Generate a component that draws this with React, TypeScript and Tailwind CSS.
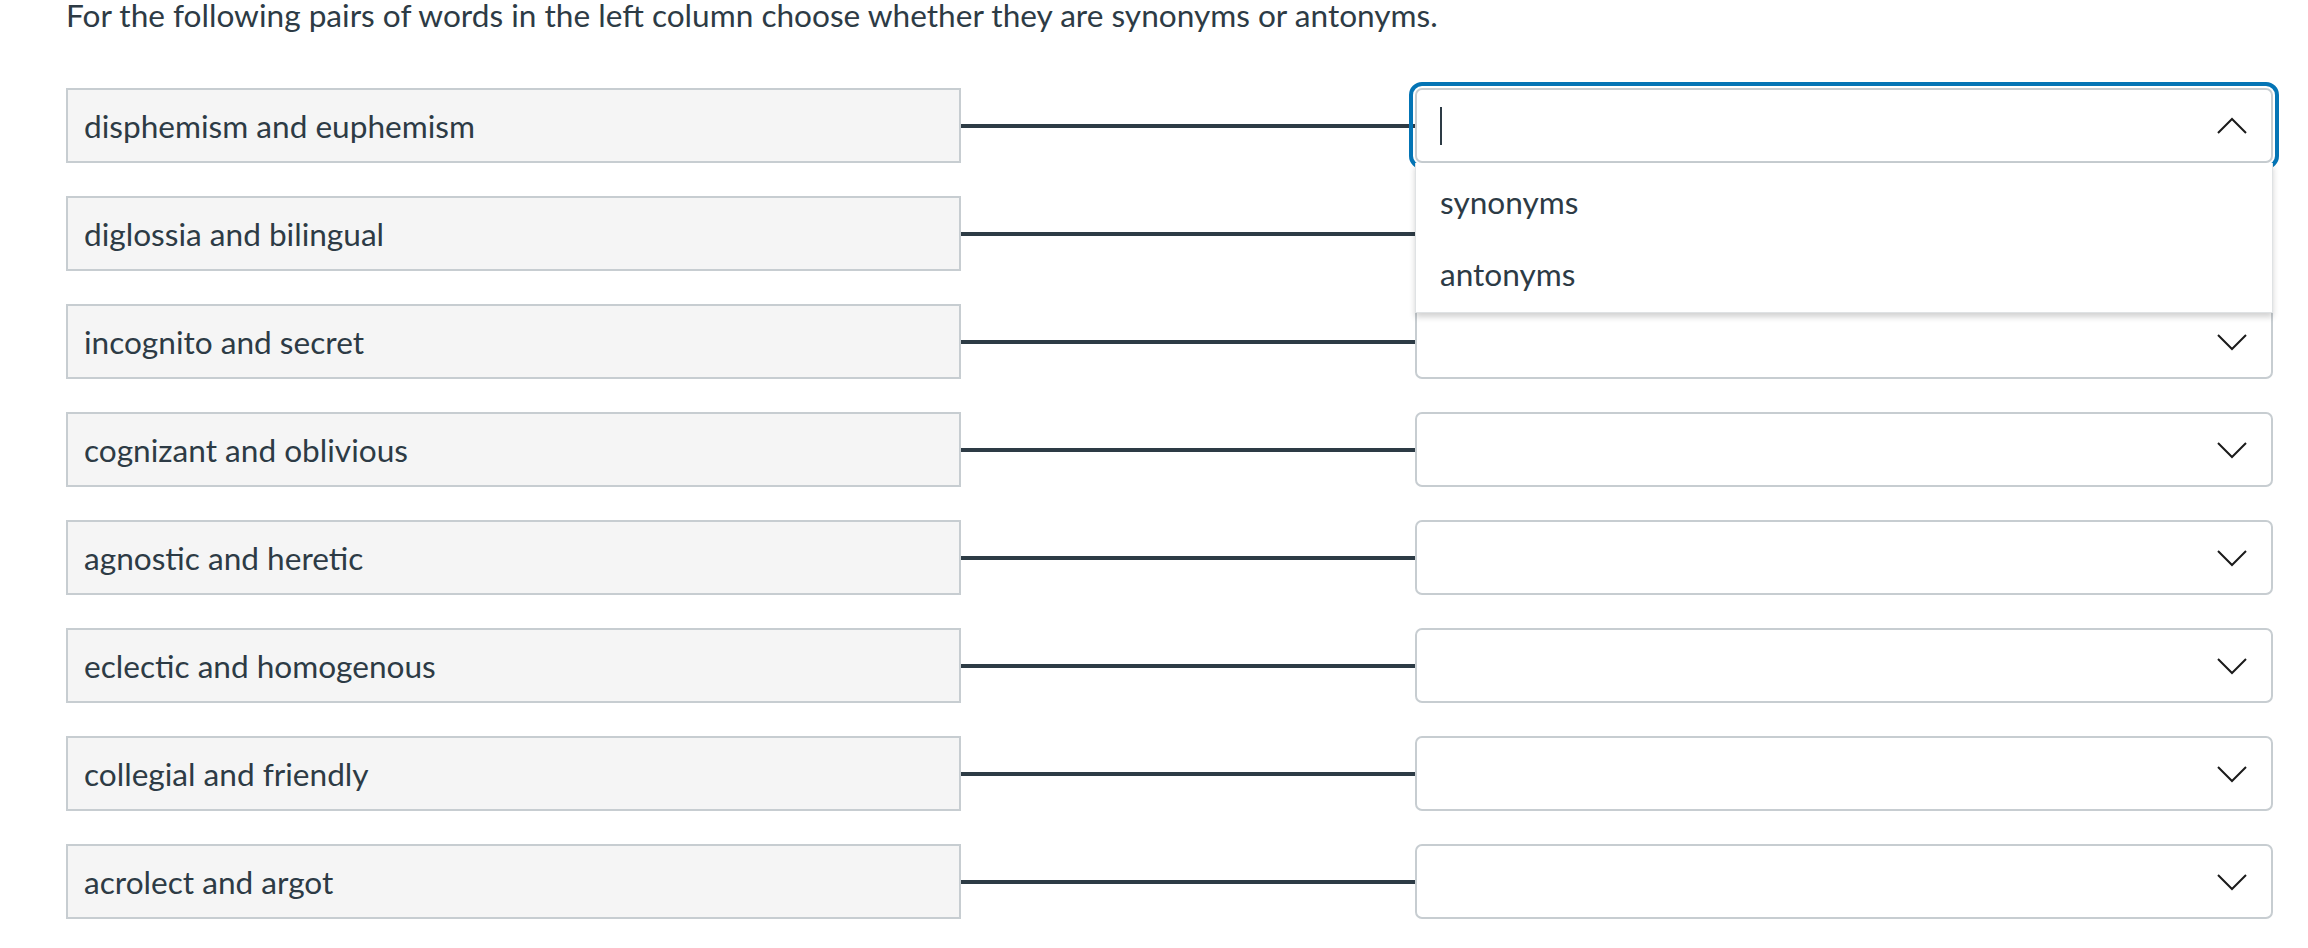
import React from "react";

const rows = [
  "disphemism and euphemism",
  "diglossia and bilingual",
  "incognito and secret",
  "cognizant and oblivious",
  "agnostic and heretic",
  "eclectic and homogenous",
  "collegial and friendly",
  "acrolect and argot",
];

function Chevron({ up }: { up?: boolean }) {
  return (
    <svg width="30" height="18" viewBox="0 0 30 18" className="shrink-0">
      <polyline
        points={up ? "1,16 15,2 29,16" : "1,2 15,16 29,2"}
        fill="none"
        stroke="#1b1b1b"
        strokeWidth="2"
      />
    </svg>
  );
}

export default function App() {
  return (
    <div
      className="w-[2308px] h-[948px] overflow-hidden bg-white text-[#2d3b45] pl-[66px]"
      style={{ fontFamily: "Lato, 'Noto Sans', sans-serif" }}
    >
      <p className="text-[31.6px] leading-[38px] -mt-[4px] whitespace-nowrap">
        For the following pairs of words in the left column choose whether they are synonyms or antonyms.
      </p>
      <div className="mt-[54px] flex flex-col gap-[33px]">
        {rows.map((r, i) => (
          <div key={i} className="flex items-center h-[75px]">
            <div className="w-[895px] h-[75px] shrink-0 border-2 border-[#c7cdd1] bg-[#f5f5f5] flex items-center pl-[16px] pt-[2px] text-[31.6px] whitespace-nowrap">
              {r}
            </div>
            <div className="w-[454px] h-[4px] shrink-0 bg-[#2d3b45]" />
            <div className="relative w-[858px] h-[75px] shrink-0">
              <div
                className={
                  i === 0
                    ? "w-full h-full rounded-[7px] border-2 border-[#c7cdd1] bg-white flex items-center justify-between pl-[23px] pr-[24px] outline-[4px] outline-solid outline-[#0374b5] outline-offset-[2px]"
                    : "w-full h-full rounded-[7px] border-2 border-[#c7cdd1] bg-white flex items-center justify-end pl-[23px] pr-[24px]"
                }
              >
                {i === 0 && <div className="w-[2px] h-[38px] bg-[#2d3b45]" />}
                <Chevron up={i === 0} />
              </div>
              {i === 0 && (
                <div className="absolute left-0 top-[75px] w-full z-10 bg-white border border-[#dfe2e4] border-t-0 pt-[4px] pb-[1px] shadow-[0_4px_6px_rgba(0,0,0,0.18)]">
                  <div className="h-[72px] flex items-center pl-[24px] text-[31.6px]">synonyms</div>
                  <div className="h-[72px] flex items-center pl-[24px] text-[31.6px]">antonyms</div>
                </div>
              )}
            </div>
          </div>
        ))}
      </div>
    </div>
  );
}
